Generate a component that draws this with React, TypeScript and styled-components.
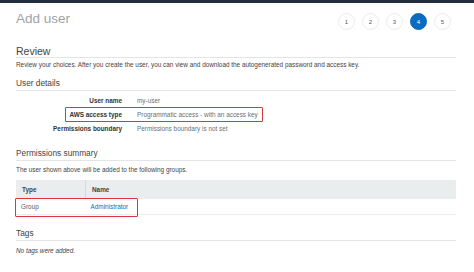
import styled, { createGlobalStyle } from 'styled-components';

const GlobalStyle = createGlobalStyle`
  html, body {
    margin: 0;
    padding: 0;
    background: #fff;
  }
  body {
    font-family: 'Liberation Sans', Arial, sans-serif;
    color: #444;
  }
`;

const steps = [1, 2, 3, 4, 5];
const activeStep = 4;

const details = [
  { label: 'User name', value: 'my-user' },
  { label: 'AWS access type', value: 'Programmatic access - with an access key', marked: true },
  { label: 'Permissions boundary', value: 'Permissions boundary is not set' },
];

const App = () => {
  return (
    <>
      <GlobalStyle />
      <TopBar />
      <Page>
        <Header>
          <PageTitle>Add user</PageTitle>
          <Steps>
            {steps.map((n) => (
              <Step key={n} active={n === activeStep}>
                {n}
              </Step>
            ))}
          </Steps>
        </Header>

        <Review>Review</Review>
        <Text top={3}>
          Review your choices. After you create the user, you can view and download the autogenerated
          password and access key.
        </Text>

        <SectionTitle top={9}>User details</SectionTitle>
        <DetailList>
          {details.map((d) => (
            <DetailRow key={d.label}>
              <Label>{d.label}</Label>
              <Value>{d.value}</Value>
              {d.marked && <RowMarker />}
            </DetailRow>
          ))}
        </DetailList>

        <SectionTitle top={13}>Permissions summary</SectionTitle>
        <Text top={5}>The user shown above will be added to the following groups.</Text>

        <TableWrap>
          <Table>
            <thead>
              <tr>
                <Th>Type</Th>
                <Th>Name</Th>
              </tr>
            </thead>
            <tbody>
              <BodyRow>
                <Td>Group</Td>
                <Td>
                  <Link href="#">Administrator</Link>
                </Td>
              </BodyRow>
            </tbody>
          </Table>
          <GroupMarker />
        </TableWrap>

        <SectionTitle top={13}>Tags</SectionTitle>
        <Note>No tags were added.</Note>
      </Page>
    </>
  );
};

export default App;

const TopBar = styled.div`
  height: 3px;
  background-color: #232f3e;
`;

const Page = styled.div`
  display: flex;
  flex-direction: column;
  width: 440px;
  margin-left: 16px;
`;

const Header = styled.div`
  display: flex;
  justify-content: space-between;
  align-items: flex-start;
`;

const PageTitle = styled.h1`
  margin: 8px 0 0;
  font-size: 13.5px;
  line-height: 16px;
  font-weight: 400;
  color: #9ea3a8;
`;

const Steps = styled.div`
  display: flex;
  gap: 7px;
  margin: 10px 5px 0 0;
`;

const Step = styled.div<{ active?: boolean }>`
  display: grid;
  place-items: center;
  width: 17px;
  height: 17px;
  box-sizing: border-box;
  border-radius: 50%;
  font-size: 6px;
  color: ${({ active }) => (active ? '#fff' : '#545b64')};
  background-color: ${({ active }) => (active ? '#0b6cbf' : '#fff')};
  border: 1px solid ${({ active }) => (active ? '#0b6cbf' : '#eaeded')};
`;

const Review = styled.h2`
  margin: 15px 0 0;
  font-size: 10.5px;
  line-height: 12px;
  font-weight: 400;
  color: #444;
  border-bottom: 1px solid #e3e5e5;
`;

const SectionTitle = styled.h3<{ top: number }>`
  margin: ${({ top }) => top}px 0 0;
  padding-bottom: 2px;
  font-size: 8.3px;
  line-height: 10px;
  font-weight: 400;
  color: #444;
  border-bottom: 1px solid #e3e5e5;
`;

const Text = styled.p<{ top: number }>`
  margin: ${({ top }) => top}px 0 0;
  font-size: 6.4px;
  line-height: 8px;
  color: #444;
`;

const DetailList = styled.div`
  display: flex;
  flex-direction: column;
  margin-top: 2px;
`;

const DetailRow = styled.div`
  position: relative;
  display: grid;
  grid-template-columns: 106px 1fr;
  column-gap: 15px;
  height: 14px;
  align-items: center;
  font-size: 6.4px;
`;

const Label = styled.span`
  text-align: right;
  font-weight: 700;
  color: #333;
`;

const Value = styled.span`
  color: #687078;
`;

const Marker = styled.span`
  position: absolute;
  box-sizing: border-box;
  border: 1.5px solid #d9363e;
  border-radius: 1px;
  pointer-events: none;
`;

const RowMarker = styled(Marker)`
  left: 49px;
  top: 0;
  width: 198px;
  height: 15px;
`;

const GroupMarker = styled(Marker)`
  left: -1px;
  top: 18px;
  width: 123px;
  height: 19px;
`;

const TableWrap = styled.div`
  position: relative;
  margin-top: 6px;
`;

const Table = styled.table`
  width: 100%;
  border-collapse: collapse;
  font-size: 6.4px;
`;

const Th = styled.th`
  height: 19px;
  padding: 0 0 0 6px;
  text-align: left;
  font-weight: 700;
  color: #444;
  background-color: #eaeded;

  &:first-child {
    width: 63px;
    border-right: 1px solid #d5dbdb;
  }
`;

const BodyRow = styled.tr`
  border-bottom: 1px solid #eaeded;
`;

const Td = styled.td`
  height: 15px;
  padding: 0 0 0 5px;
  color: #545b64;
`;

const Link = styled.a`
  color: #0073bb;
  text-decoration: none;
`;

const Note = styled.p`
  margin: 6px 0 0;
  font-size: 6.4px;
  line-height: 8px;
  font-style: italic;
  color: #444;
`;
